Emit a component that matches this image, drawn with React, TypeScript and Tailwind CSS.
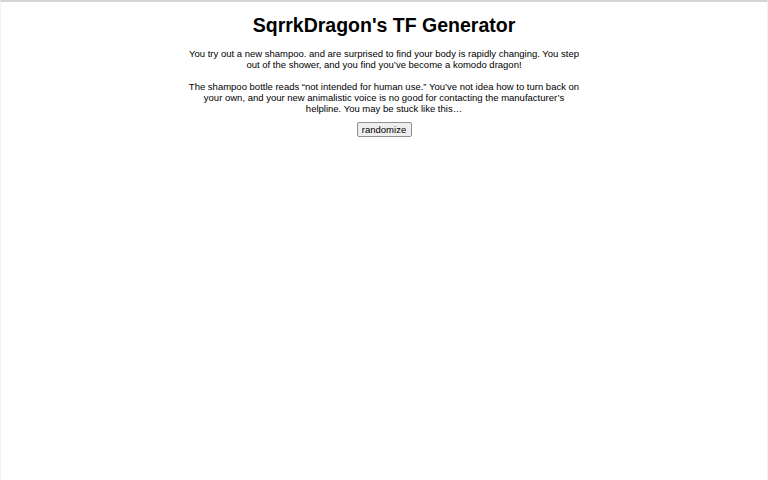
import { useState } from 'react';

const STORIES = [
  [
    'You try out a new shampoo. and are surprised to find your body is rapidly changing. You step out of the shower, and you find you\u2019ve become a komodo dragon!',
    'The shampoo bottle reads \u201cnot intended for human use.\u201d You\u2019ve not idea how to turn back on your own, and your new animalistic voice is no good for contacting the manufacturer\u2019s helpline. You may be stuck like this\u2026',
  ],
];

export default function App() {
  const [idx, setIdx] = useState(0);
  const story = STORIES[idx];

  return (
    <div className="h-[480px] border-t-2 border-t-[#d4d4d4] border-x border-x-[#f4f4f4] bg-white text-black font-['Liberation_Sans',Arial,sans-serif]">
      <div className="mx-auto w-[392px] pt-[12px] text-center">
        <h1 className="text-[19.5px] font-bold leading-[22px]">SqrrkDragon's TF Generator</h1>
        <div className="mt-[12px] flex flex-col gap-[11px] text-[9.5px] leading-[11px]">
          {story.map((p, i) => (
            <p key={i}>{p}</p>
          ))}
        </div>
        <button
          className="mt-[8px] w-[55px] h-[15px] text-[9.5px] leading-[12px] bg-[#efefef] border border-[#8f8f8f] rounded-[2px]"
          onClick={() => setIdx((idx + 1) % STORIES.length)}
        >
          randomize
        </button>
      </div>
    </div>
  );
}
